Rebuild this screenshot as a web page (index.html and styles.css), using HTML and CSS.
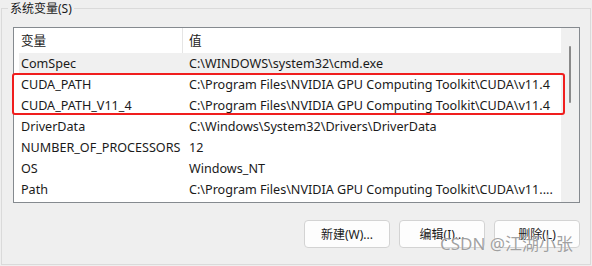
FILE: index.html
```html
<!DOCTYPE html>
<html lang="zh-CN">
<head>
    <meta charset="UTF-8">
    <meta name="viewport" content="width=device-width, initial-scale=1.0">

    <title>系统变量</title>

    <link rel="stylesheet" href="styles.css">
</head>
<body>
    <div class="group">
        <div class="group-title">系统变量(S)</div>

        <div class="listbox">
            <div class="list-main">
                <div class="list-head">
                    <div class="col-name">变量</div>
                    <div class="col-value">值</div>
                </div>
                <div class="row hover">
                    <div class="col-name">ComSpec</div>
                    <div class="col-value">C:\WINDOWS\system32\cmd.exe</div>
                </div>
                <div class="row">
                    <div class="col-name">CUDA_PATH</div>
                    <div class="col-value">C:\Program Files\NVIDIA GPU Computing Toolkit\CUDA\v11.4</div>
                </div>
                <div class="row">
                    <div class="col-name">CUDA_PATH_V11_4</div>
                    <div class="col-value">C:\Program Files\NVIDIA GPU Computing Toolkit\CUDA\v11.4</div>
                </div>
                <div class="row">
                    <div class="col-name">DriverData</div>
                    <div class="col-value">C:\Windows\System32\Drivers\DriverData</div>
                </div>
                <div class="row">
                    <div class="col-name">NUMBER_OF_PROCESSORS</div>
                    <div class="col-value">12</div>
                </div>
                <div class="row">
                    <div class="col-name">OS</div>
                    <div class="col-value">Windows_NT</div>
                </div>
                <div class="row">
                    <div class="col-name">Path</div>
                    <div class="col-value">C:\Program Files\NVIDIA GPU Computing Toolkit\CUDA\v11....</div>
                </div>
            </div>
            <div class="scrollbar">
                <div class="thumb"></div>
            </div>

            <!-- red mark around the two cuda rows -->
            <div class="mark"></div>
        </div>

        <div class="buttons">
            <button class="btn">新建(W)...</button>
            <button class="btn">编辑(I)...</button>
            <button class="btn">删除(L)</button>
        </div>

        <div class="watermark">CSDN @江湖小张</div>
    </div>
</body>
</html>
```

FILE: styles.css
```css
:root {
    --bg: #efefef;
    --line: #dadada;
    --mark: #f01e1e;
}

body {
    margin: 0;
    background-color: var(--bg);
    font-family: "Noto Sans", "Noto Sans CJK SC", sans-serif;
    font-size: 12px;
    color: #1a1a1a;
}

.group {
    margin: 8px 1px 0 1px;
    height: 257px;
    box-sizing: border-box;
    border: 1px solid var(--line);
    position: relative;
}

.group-title {
    width: fit-content;
    margin: -8px 0 0 6px;
    padding: 0 2px;
    line-height: 16px;
    background-color: var(--bg);
}

.listbox {
    margin: 10px 10px 0 11px;
    height: 176px;
    box-sizing: border-box;
    border: 1px solid #858a8f;
    background-color: #fff;
    display: flex;
    position: relative;
    font-size: 12.6px;
}

.list-main {
    flex: 1;
}

.list-head,
.row {
    display: grid;
    grid-template-columns: 164px 1fr;
    margin-left: 5px;
    white-space: nowrap;
}
.list-head {
    height: 25px;
    line-height: 25px;
}
.list-head .col-name {
    border-right: 1px solid #e5e5e5;
}
.row {
    height: 21px;
    line-height: 21px;
}
.row.hover {
    background-color: #f0f0f0;
}
.col-name {
    padding-left: 2px;
    overflow: hidden;
}
.col-value {
    padding-left: 6px;
    overflow: hidden;
}

.scrollbar {
    width: 18px;
    background-color: #f0f0f0;
}
.thumb {
    margin: 18px 0 0 8px;
    width: 2px;
    height: 57px;
    border-radius: 1px;
    background-color: #8a8a8a;
}

.mark {
    position: absolute;
    left: -2px;
    top: 45px;
    width: 553px;
    height: 42px;
    box-sizing: border-box;
    border: 2px solid var(--mark);
    border-radius: 3px;
}

.buttons {
    display: flex;
    justify-content: flex-end;
    gap: 9px;
    margin: 17px 10px 0 0;
}
.btn {
    width: 86px;
    height: 28px;
    border: 1px solid #d3d3d3;
    border-radius: 4px;
    background-color: #fdfdfd;
    font-family: inherit;
    font-size: 12px;
    color: #1a1a1a;
    padding: 0;
}

.watermark {
    position: absolute;
    left: 438px;
    top: 224px;
    font-size: 17px;
    line-height: 22px;
    color: rgba(130, 130, 130, 0.75);
    text-shadow: 0 0 1px #fff;
    white-space: nowrap;
}
```
